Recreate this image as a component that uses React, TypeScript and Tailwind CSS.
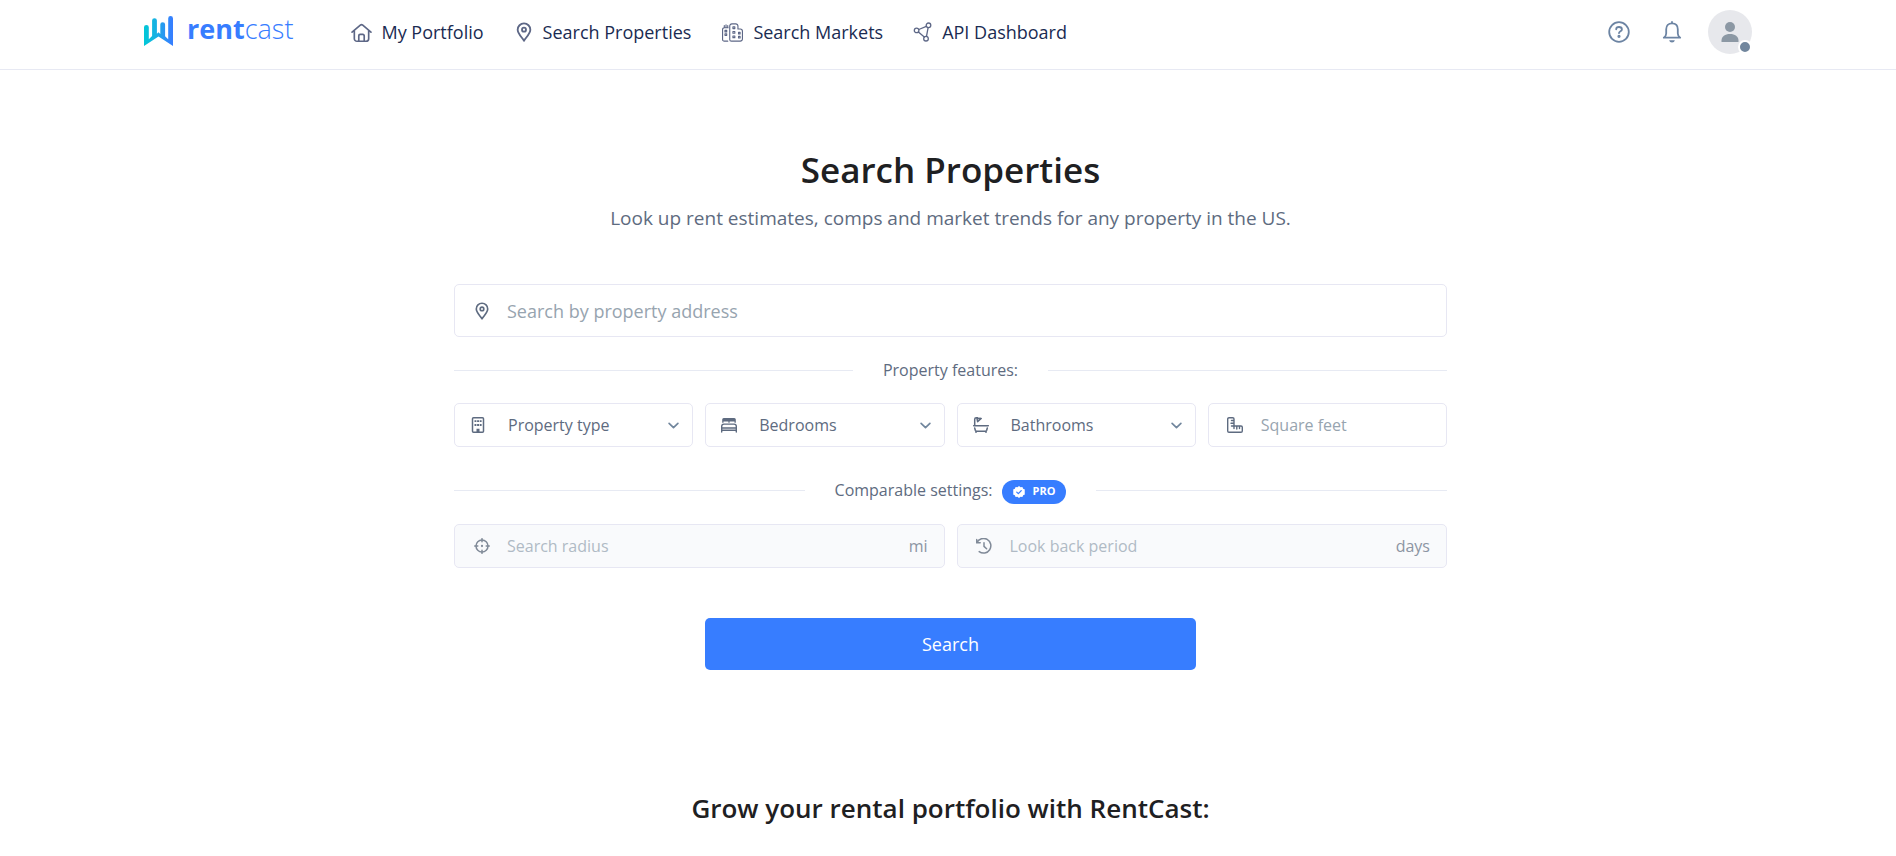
import React from "react";

type IconProps = { className?: string };

function Svg({
  className = "",
  width = 1.6,
  box = "0 0 24 24",
  children,
}: {
  className?: string;
  width?: number;
  box?: string;
  children: React.ReactNode;
}) {
  return (
    <svg
      viewBox={box}
      className={`shrink-0 ${className}`}
      fill="none"
      stroke="currentColor"
      strokeWidth={width}
      strokeLinecap="round"
      strokeLinejoin="round"
      aria-hidden="true"
    >
      {children}
    </svg>
  );
}

const LogoMark = ({ className = "" }: IconProps) => (
  <svg viewBox="0 0 29 30" className={`shrink-0 ${className}`} aria-hidden="true">
    <defs>
      <linearGradient id="mark" x1="0" y1="0" x2="1" y2="0">
        <stop offset="0" stopColor="#00c8d7" />
        <stop offset="0.45" stopColor="#1aaee4" />
        <stop offset="0.85" stopColor="#3187fb" />
        <stop offset="1" stopColor="#377dff" />
      </linearGradient>
    </defs>
    <path
      fill="url(#mark)"
      d="M0 30V11.3a2.4 2.4 0 0 1 4.8 0v12l3.3-3.4V4.6a2.4 2.4 0 0 1 4.8 0v13.2l1.6-1.6 1.8 1.8V8.6a2.4 2.4 0 0 1 4.8 0v11.6l3.1 3.1V2.4a2.4 2.4 0 0 1 4.8 0V30L14.5 20.4z"
    />
  </svg>
);

const HomeIcon = ({ className }: IconProps) => (
  <Svg className={className} width={1.9}>
    <path d="M1.2 11.6 11 3.4a1.7 1.7 0 0 1 2.1 0l9.7 8.2M3.8 9.8V19a3 3 0 0 0 3 3h10.4a3 3 0 0 0 3-3V9.8M8.9 21.8v-6.2a1.5 1.5 0 0 1 1.5-1.5h3.2a1.5 1.5 0 0 1 1.5 1.5v6.2" />
  </Svg>
);

const PinIcon = ({ className }: IconProps) => (
  <Svg className={className} width={2.2}>
    <path d="M12 22.4c-2-3.4-7.6-8.3-7.6-13.1a7.6 7.6 0 0 1 15.2 0c0 4.8-5.6 9.7-7.6 13.1z" />
    <circle cx="12" cy="9.2" r="2.4" />
  </Svg>
);

const CityIcon = ({ className }: IconProps) => (
  <Svg className={className} width={1.3} box="0 0 26 22">
    <path d="M7.5 21H3.5a2 2 0 0 1-2-2V7.5a2 2 0 0 1 2-2H8M3.5 5.5V3M5.5 5.5V2M7.5 5.5V3M9.8 19V3.5A2.5 2.5 0 0 1 12.3 1h4.5a2.5 2.5 0 0 1 2.5 2.5V7M9.8 19a2 2 0 0 0 2 2H22a2.5 2.5 0 0 0 2.5-2.5v-9A2.5 2.5 0 0 0 22 7h-2.7" />
    <path d="M4.3 8.5h2v1.8h-2zM4.3 12.5h2v1.8h-2zM13.5 4.5h2.2v2h-2.2zM13.5 9.8h2.2v2h-2.2zM13.5 15h2.2v2h-2.2zM20 10.8h1.8v1.8H20zM20 15.5h1.8v1.8H20z" />
  </Svg>
);

const NodesIcon = ({ className }: IconProps) => (
  <Svg className={className} width={1.3} box="0 0 20 20">
    <circle cx="3.6" cy="8.4" r="2.3" />
    <circle cx="15.5" cy="3.3" r="2.3" />
    <circle cx="13" cy="16.7" r="2.3" />
    <path d="M5.8 7.5 13.3 4.3M15.1 5.6 13.5 14.4M5.4 9.9 11.3 15.1" />
  </Svg>
);

const HelpIcon = ({ className }: IconProps) => (
  <Svg className={className} width={1.8} box="0 0 22 22">
    <circle cx="11" cy="11" r="9.8" />
    <path d="M8.2 8.3c0-1.5 1.2-2.3 2.8-2.3s2.9.9 2.9 2.4c0 2-2.7 1.8-2.9 3.7" />
    <circle cx="11" cy="15.3" r="0.7" fill="currentColor" />
  </Svg>
);

const BellIcon = ({ className }: IconProps) => (
  <Svg className={className} width={1.8} box="0 0 20 22">
    <path d="M1.8 16.7c1.5-1 2.4-2.2 2.4-4.2V8.3C4.2 4.5 6.5 2.4 10 2.4s5.8 2.1 5.8 5.9v4.2c0 2 .9 3.2 2.4 4.2zM10 2.2V1" />
    <path d="M7.2 19.3h5.6c-.4 1.5-1.3 2.2-2.8 2.2s-2.4-.7-2.8-2.2z" fill="currentColor" stroke="none" />
  </Svg>
);

const PersonIcon = ({ className }: IconProps) => (
  <Svg className={className} box="0 0 18 20">
    <g fill="currentColor" stroke="none">
      <circle cx="9" cy="5" r="5" />
      <path d="M0.5 20v-1.5C0.5 14.500 4 12 9 12s8.500 2.500 8.500 6.500V20z" />
    </g>
  </Svg>
);

const BuildingIcon = ({ className }: IconProps) => (
  <Svg className={className} width={1.5} box="0 0 16 16">
    <rect x="2.5" y="0.8" width="11" height="14.4" rx="1" />
    <path
      d="M4.5 3.2h1.9V5.1H4.5zM7.1 3.2H9V5.1H7.1zM9.700 3.2h1.9V5.1H9.700zM4.500 7h1.900v1.900H4.500zM7.100 7H9v1.900H7.100zM9.700 7h1.900v1.900H9.700zM6.500 11.800h3v3.500h-3z"
      fill="currentColor"
      stroke="none"
    />
  </Svg>
);

const BedIcon = ({ className }: IconProps) => (
  <Svg className={className} width={1.4} box="0 0 16 16">
    <path
      d="M1.2 5.8V2.5A1.5 1.5 0 0 1 2.7 1h10.6a1.5 1.5 0 0 1 1.5 1.5v3.3h-1.3V4.5H8.6v1.3H7.4V4.5H2.5v1.3z"
      fill="currentColor"
      stroke="none"
    />
    <path d="M0.7 15V9.3A2.2 2.2 0 0 1 2.9 7.1h10.2a2.2 2.2 0 0 1 2.2 2.2V15M0.7 11h14.6M0.7 13.3h14.6" />
  </Svg>
);

const BathIcon = ({ className }: IconProps) => (
  <Svg className={className} width={1.5} box="0 0 16 16">
    <path d="M0.7 8.7h14.6M1.7 8.5V2.3A1.5 1.5 0 0 1 3.2 0.8h1.4M4 1.7l3.3-.5M4.6 4.6 8.2 1.5M4.6 4.6 4 1.7M1.7 11l.6 2.3a1.4 1.4 0 0 0 1.3 1h8.8a1.4 1.4 0 0 0 1.3-1l.6-2.3M3 14.3v1M13 14.3v1" />
  </Svg>
);

const RulerIcon = ({ className }: IconProps) => (
  <Svg className={className} width={1.4} box="0 0 16 16">
    <path d="M2 0.7h3.7A1.3 1.3 0 0 1 7 2v7h7a1.3 1.3 0 0 1 1.3 1.3V14a1.3 1.3 0 0 1-1.3 1.3H2A1.3 1.3 0 0 1 0.7 14V2A1.3 1.3 0 0 1 2 0.7zM7 3.5H4.5M7 6.2H4M7 9H4.5M7 9v2.5M9.8 9v3M12.5 9v2.5" />
  </Svg>
);

const TargetIcon = ({ className }: IconProps) => (
  <Svg className={className} width={1.5} box="0 0 16 16">
    <circle cx="8" cy="8" r="6" />
    <path d="M8 0.7v3.1M8 12.2v3.1M0.7 8h3.1M12.2 8h3.1" />
    <circle cx="8" cy="8" r="0.4" fill="currentColor" />
  </Svg>
);

const HistoryIcon = ({ className }: IconProps) => (
  <Svg className={className} width={1.5} box="0 0 16 16">
    <path d="M0.7 1.5v3.3h3.5M1 4.5A7.3 7.3 0 1 1 3.2 13.6M8 4.8v3.6l2.6 2.4" />
  </Svg>
);

const ChevronIcon = ({ className }: IconProps) => (
  <Svg className={className} width={1.5} box="0 0 10 10">
    <path d="M1 3l4 4 4-4" />
  </Svg>
);

const VerifiedIcon = ({ className }: IconProps) => (
  <Svg className={className} box="0 0 24 24">
    <path
      d="M12 0l3 2.3 3.8-.4 1.5 3.5 3.4 1.6-.4 3.800L24 12l-.7 1.200.4 3.800-3.400 1.600-1.500 3.500-3.800-.4L12 24l-3-2.300-3.800.4-1.500-3.500L.3 17l.4-3.800L0 12l.7-1.200L.3 7l3.400-1.600 1.500-3.500 3.800.4z"
      fill="currentColor"
      stroke="none"
    />
    <path d="M7.5 12.2l3.2 3 5.8-6" stroke="#377dff" strokeWidth="2.6" />
  </Svg>
);

const navItems = [
  { label: "My Portfolio", icon: <HomeIcon className="size-[21px]" /> },
  { label: "Search Properties", icon: <PinIcon className="size-5" /> },
  { label: "Search Markets", icon: <CityIcon className="h-[19px] w-[23px]" /> },
  { label: "API Dashboard", icon: <NodesIcon className="size-5" /> },
];

function Header() {
  return (
    <header className="border-b border-[#e7e9f3] bg-white">
      <div className="mx-auto flex h-[69px] max-w-[1656px] items-center px-6">
        <a href="#" className="mb-3 flex items-center" aria-label="rentcast">
          <LogoMark className="mt-1 h-[30px] w-[29px]" />
          <span className="ml-[14px] text-[27px] leading-8 text-[#377dff]">
            <span className="font-bold">rent</span>
            <span className="font-light">cast</span>
          </span>
        </a>
        <nav className="ml-[58px] flex items-center gap-[30px] pb-[5px] text-[18px] text-[#1a2b52]">
          {navItems.map((item) => (
            <a key={item.label} href="#" className="flex items-center gap-[9px] whitespace-nowrap">
              <span className="text-[#5d6786]">{item.icon}</span>
              {item.label}
            </a>
          ))}
        </nav>
        <div className="ml-auto flex items-center pb-[5px] text-[#6c84a3]">
          <button type="button" aria-label="Help">
            <HelpIcon className="size-[22px]" />
          </button>
          <button type="button" aria-label="Notifications" className="ml-8">
            <BellIcon className="h-[22px] w-5" />
          </button>
          <button
            type="button"
            aria-label="Account"
            className="relative ml-[26px] flex size-11 items-center justify-center rounded-full bg-[#e7e8ec]"
          >
            <PersonIcon className="h-5 w-[18px] text-[#8c98a4]" />
            <span className="absolute right-0 bottom-0 size-[14px] rounded-full border-2 border-white bg-[#71869d]" />
          </button>
        </div>
      </div>
    </header>
  );
}

function Divider({ children }: { children: React.ReactNode }) {
  return (
    <div className="flex h-6 items-center gap-[30px]">
      <span className="h-px flex-1 bg-[#e7eaf3]" />
      <div className="flex items-center text-base text-[#5e6b80]">{children}</div>
      <span className="h-px flex-1 bg-[#e7eaf3]" />
    </div>
  );
}

function SelectField({ label, icon }: { label: string; icon: React.ReactNode }) {
  return (
    <div className="relative h-11">
      <span className="pointer-events-none absolute inset-y-0 left-4 flex items-center text-[#5e6b80]">
        {icon}
      </span>
      <select
        aria-label={label}
        className="size-full appearance-none rounded-[5px] border border-[#e7e7f3] bg-white pl-[53px] text-base text-[#5e6b80]"
      >
        <option>{label}</option>
      </select>
      <ChevronIcon className="pointer-events-none absolute top-[17px] right-[14px] size-[11px] text-[#71869d]" />
    </div>
  );
}

function TextField({
  label,
  icon,
  unit,
  disabled = false,
  large = false,
}: {
  label: string;
  icon: React.ReactNode;
  unit?: string;
  disabled?: boolean;
  large?: boolean;
}) {
  return (
    <label
      className={`flex items-center rounded-[5px] border border-[#e7e7f3] pr-4 pl-[18px] ${
        large ? "h-[53px] text-[18px]" : "h-11 text-base"
      } ${disabled ? "bg-[#f9fafc]" : "bg-white"}`}
    >
      <span
        className={`mr-[17px] flex w-[17px] justify-center ${disabled ? "text-[#808a98]" : "text-[#5e6b80]"}`}
      >
        {icon}
      </span>
      <input
        aria-label={label}
        type="text"
        placeholder={label}
        disabled={disabled}
        className={`h-full w-full min-w-0 flex-1 bg-transparent outline-none ${
          disabled ? "placeholder:text-[#b0bac5]" : "placeholder:text-[#97a4af]"
        }`}
      />
      {unit && <span className="text-[#8c95a3]">{unit}</span>}
    </label>
  );
}

export default function App() {
  return (
    <div className="min-h-screen overflow-x-hidden bg-white font-['Open_Sans','Noto_Sans',sans-serif]">
      <Header />
      <main className="pl-[5px]">
        <div className="mx-auto max-w-[993px] pt-[78px]">
          <h1 className="text-center text-[35px] leading-[44px] font-semibold text-[#1e2022]">
            Search Properties
          </h1>
          <p className="mt-3 text-center text-[19px] leading-7 text-[#5e6b80]">
            Look up rent estimates, comps and market trends for any property in the US.
          </p>
          <form className="mt-[52px]" onSubmit={(e) => e.preventDefault()}>
            <TextField large label="Search by property address" icon={<PinIcon className="size-[18px]" />} />
            <div className="mt-[21px] mb-[21px]">
              <Divider>Property features:</Divider>
            </div>
            <div className="grid grid-cols-4 gap-3">
              <SelectField label="Property type" icon={<BuildingIcon className="size-4" />} />
              <SelectField label="Bedrooms" icon={<BedIcon className="size-4" />} />
              <SelectField label="Bathrooms" icon={<BathIcon className="size-4" />} />
              <TextField label="Square feet" icon={<RulerIcon className="size-4" />} />
            </div>
            <div className="mt-[31px] mb-[22px]">
              <Divider>
                Comparable settings:
                <span className="mt-[3px] ml-[9px] flex h-6 items-center gap-2 rounded-full bg-[#377dff] px-[11px] text-[11px] font-bold text-white">
                  <VerifiedIcon className="size-3" />
                  PRO
                </span>
              </Divider>
            </div>
            <div className="grid grid-cols-2 gap-3">
              <TextField disabled label="Search radius" unit="mi" icon={<TargetIcon className="size-4" />} />
              <TextField disabled label="Look back period" unit="days" icon={<HistoryIcon className="size-4" />} />
            </div>
            <button
              type="submit"
              className="mx-auto mt-[50px] block h-[52px] w-[491px] max-w-full rounded-[5px] bg-[#377dff] text-[18px] text-white"
            >
              Search
            </button>
          </form>
          <h2 className="mt-[120px] pb-8 text-center text-[26px] leading-9 font-semibold text-[#1e2022]">
            Grow your rental portfolio with RentCast:
          </h2>
        </div>
      </main>
    </div>
  );
}
